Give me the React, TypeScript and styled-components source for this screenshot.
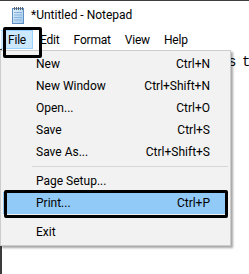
import React from "react";
import styled, { createGlobalStyle } from "styled-components";

const GlobalStyle = createGlobalStyle`
  html, body { margin: 0; padding: 0; background: #ffffff; overflow: hidden; }
  #root { width: 249px; height: 274px; }
`;

const UI_FONT = `"Roboto", "Liberation Sans", sans-serif`;

const Window = styled.div`
  position: relative;
  width: 249px;
  height: 274px;
  box-sizing: border-box;
  border-top: 1px solid #3e3e3e;
  background: #ffffff;
  display: flex;
  flex-direction: column;
  overflow: hidden;
  font-family: ${UI_FONT};
  font-size: 12px;
  color: #000;
`;

const TitleBar = styled.div`
  height: 27px;
  flex: none;
  display: flex;
  align-items: center;
  padding-left: 11px;
  gap: 6px;
`;

const Title = styled.span`
  font-size: 12px;
  line-height: 16px;
  padding-top: 1px;
`;

const MenuBar = styled.div`
  height: 21px;
  flex: none;
  display: flex;
  align-items: stretch;
  padding-left: 1px;
`;

const MenuTitle = styled.div<{ $active?: boolean }>`
  margin-top: 2px;
  padding: 0 7px;
  display: flex;
  align-items: center;
  box-sizing: border-box;
  letter-spacing: -0.2px;
  background: ${(p) => (p.$active ? "#cce8ff" : "transparent")};
  border: 1px solid ${(p) => (p.$active ? "#99d1ff" : "transparent")};
  border-left-width: 0;
  border-right-width: ${(p) => (p.$active ? "1px" : "0")};
  padding-right: ${(p) => (p.$active ? "6px" : "7px")};
`;

const Editor = styled.div`
  flex: 1;
  border-left: 2px solid #3c3c3c;
  padding: 5px 0 0 2px;
  font-family: "Liberation Mono", monospace;
  font-size: 14px;
  line-height: 17px;
  letter-spacing: -1.4px;
  white-space: pre;
  overflow: hidden;
`;

const Dropdown = styled.div`
  position: absolute;
  left: 0;
  top: 49px;
  width: 231px;
  box-sizing: border-box;
  background: #f2f2f2;
  border: 1px solid #cccccc;
  box-shadow: 2px 2px 2px rgba(0, 0, 0, 0.35);
  padding: 2px 0;
  display: flex;
  flex-direction: column;
`;

const Item = styled.div<{ $hot?: boolean }>`
  height: 22px;
  display: flex;
  align-items: center;
  justify-content: space-between;
  margin: 0 ${(p) => (p.$hot ? "2px" : "0")};
  padding: 0 ${(p) => (p.$hot ? "18px" : "20px")} 0 ${(p) => (p.$hot ? "33px" : "35px")};
  background: ${(p) => (p.$hot ? "#91c9f7" : "transparent")};
`;

const Separator = styled.div`
  height: 7px;
  display: flex;
  align-items: center;
  padding: 0 2px 0 31px;
  &::after {
    content: "";
    flex: 1;
    height: 1px;
    background: #d7d7d7;
  }
`;

const Callout = styled.div<{ $l: number; $t: number; $w: number; $h: number }>`
  position: absolute;
  left: ${(p) => p.$l}px;
  top: ${(p) => p.$t}px;
  width: ${(p) => p.$w}px;
  height: ${(p) => p.$h}px;
  box-sizing: border-box;
  border: 3px solid #000;
  border-radius: 2px;
  pointer-events: none;
`;

const NotepadIcon = () => (
  <svg width="14" height="18" viewBox="0 0 14 18">
    <defs>
      <linearGradient id="pg" x1="0" y1="0" x2="1" y2="1">
        <stop offset="0" stopColor="#e3f1fc" />
        <stop offset="1" stopColor="#9dc6ea" />
      </linearGradient>
    </defs>
    <rect x="1.5" y="2.5" width="11" height="15" fill="url(#pg)" stroke="#5d8fc4" />
    <g stroke="#86b4df" strokeWidth="1">
      <line x1="3" y1="6.5" x2="11" y2="6.5" />
      <line x1="3" y1="9" x2="11" y2="9" />
      <line x1="3" y1="11.5" x2="11" y2="11.5" />
      <line x1="3" y1="14" x2="11" y2="14" />
    </g>
    <g fill="#5a6470">
      <rect x="3" y="1" width="1" height="3" />
      <rect x="5" y="1" width="1" height="3" />
      <rect x="7" y="1" width="1" height="3" />
      <rect x="9" y="1" width="1" height="3" />
      <rect x="11" y="1" width="1" height="3" />
    </g>
  </svg>
);

type Entry = { label: string; shortcut?: string; hot?: boolean } | "sep";

const entries: Entry[] = [
  { label: "New", shortcut: "Ctrl+N" },
  { label: "New Window", shortcut: "Ctrl+Shift+N" },
  { label: "Open...", shortcut: "Ctrl+O" },
  { label: "Save", shortcut: "Ctrl+S" },
  { label: "Save As...", shortcut: "Ctrl+Shift+S" },
  "sep",
  { label: "Page Setup..." },
  { label: "Print...", shortcut: "Ctrl+P", hot: true },
  "sep",
  { label: "Exit" },
];

const menus = ["File", "Edit", "Format", "View", "Help"];

export default function App() {
  return (
    <>
      <GlobalStyle />
      <Window>
        <TitleBar>
          <NotepadIcon />
          <Title>*Untitled - Notepad</Title>
        </TitleBar>
        <MenuBar>
          {menus.map((m) => (
            <MenuTitle key={m} $active={m === "File"}>
              {m}
            </MenuTitle>
          ))}
        </MenuBar>
        <Editor>{"Welcome to Notepad! Here, this is the text."}</Editor>
        <Dropdown>
          {entries.map((e, i) =>
            e === "sep" ? (
              <Separator key={i} />
            ) : (
              <Item key={i} $hot={e.hot}>
                <span>{e.label}</span>
                {e.shortcut && <span>{e.shortcut}</span>}
              </Item>
            )
          )}
        </Dropdown>
        <Callout $l={3} $t={26} $w={39} $h={31} />
        <Callout $l={4} $t={189} $w={224} $h={28} />
      </Window>
    </>
  );
}
